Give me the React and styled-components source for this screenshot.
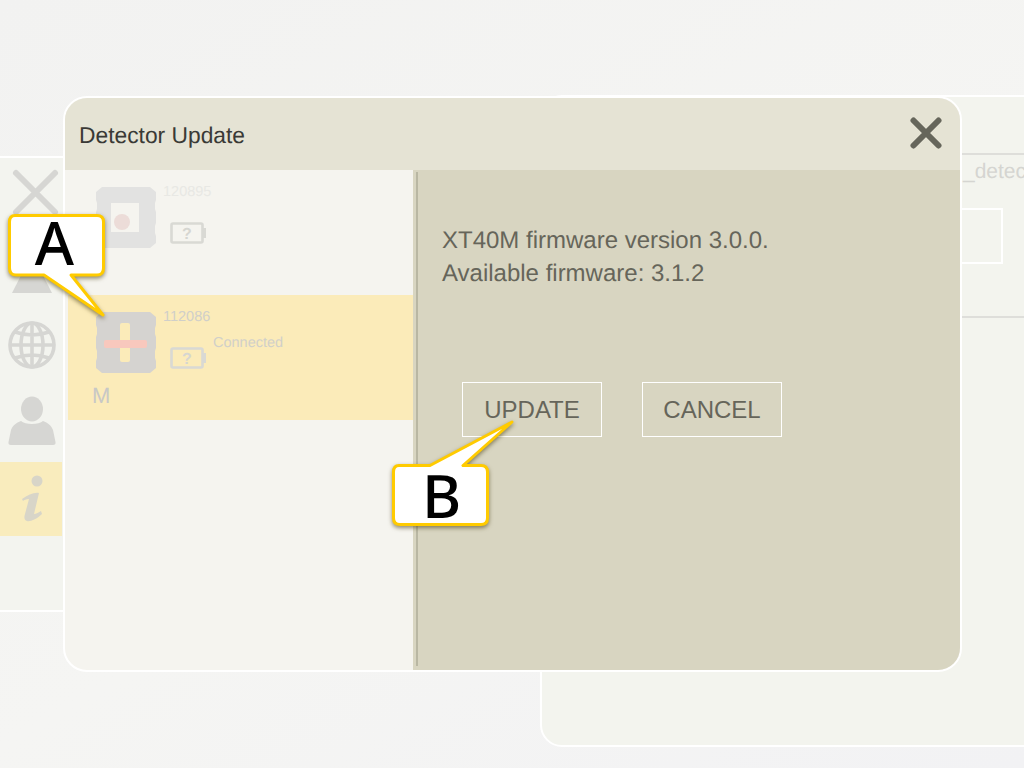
import React from "react";
import styled, { createGlobalStyle } from "styled-components";

const Global = createGlobalStyle`
  html, body { margin: 0; padding: 0; background: #f3f3f2; }
  body { font-family: "Liberation Sans", Arial, sans-serif; text-rendering: geometricPrecision; }
`;

const Desktop = styled.div`
  position: relative;
  width: 1024px;
  height: 768px;
  overflow: hidden;
  background: linear-gradient(150deg, #f2f2f1 0%, #f5f5f3 55%, #f2f2f4 100%);
`;

const Window = styled.section`
  position: absolute;
  box-sizing: border-box;
  border: 2px solid #fff;
`;

const SidePanel = styled(Window)`
  left: -4px;
  top: 156px;
  width: 70px;
  height: 456px;
  background: #f3f4ef;
  padding-left: 2px;
  display: flex;
  flex-direction: column;
`;

const SideRow = styled.div`
  height: ${(p) => p.$h || 76}px;
  width: 62px;
  flex: none;
  background: ${(p) => (p.$active ? "#f9ecbd" : "transparent")};
  svg { display: block; }
`;

const BackPanel = styled(Window)`
  left: 540px;
  top: 95px;
  width: 520px;
  height: 652px;
  border-radius: 22px;
  background: #f3f4ee;
  overflow: hidden;
  padding-left: 421px;
  color: #d5d5d1;
`;

const BackHead = styled.div`
  height: 56px;
  margin-left: -20px;
  border-bottom: 2px solid #dededa;
`;

const BackName = styled.div`
  font-size: 21px;
  line-height: 34px;
  height: 53px;
  white-space: nowrap;
`;

const BackField = styled.div`
  box-sizing: border-box;
  width: 100px;
  height: 56px;
  margin-left: -60px;
  border: 2px solid #fff;
`;

const BackRule = styled.div`
  height: 2px;
  margin: 52px 0 0 -20px;
  background: #dededa;
`;

const Modal = styled(Window)`
  left: 63px;
  top: 96px;
  width: 899px;
  height: 576px;
  border-radius: 24px;
  overflow: hidden;
  display: flex;
  flex-direction: column;
  background: #f5f4ef;
`;

const ModalHeader = styled.header`
  flex: none;
  height: 72px;
  background: #e5e3d4;
  display: flex;
  align-items: center;
  justify-content: space-between;
  padding: 0 18px 0 14px;
`;

const Title = styled.h1`
  margin: 2px 0 0;
  font-size: 22.8px;
  font-weight: 400;
  color: #3a3a36;
`;

const CloseButton = styled.button`
  border: 0;
  padding: 0;
  background: none;
  width: 32px;
  height: 32px;
  margin-bottom: 2px;
  svg { display: block; }
`;

const ModalBody = styled.div`
  flex: 1;
  display: flex;
  min-height: 0;
`;

const DeviceList = styled.aside`
  width: 348px;
  flex: none;
  padding-left: 3px;
  box-sizing: border-box;
`;

const DeviceRow = styled.div`
  box-sizing: border-box;
  height: 125px;
  padding: 17px 0 0 28px;
  background: ${(p) => (p.$selected ? "#fbebb9" : "transparent")};
`;

const DeviceTop = styled.div`
  display: flex;
  gap: 7px;
`;

const DeviceInfo = styled.div`
  margin-top: -3px;
`;

const Serial = styled.div`
  font-size: 14.5px;
  line-height: 16px;
  color: ${(p) => (p.$selected ? "#d0cfc9" : "#e8e8e4")};
`;

const StatusLine = styled.div`
  display: flex;
  gap: 7px;
  margin: 22px 0 0 7px;
`;

const StatusText = styled.div`
  font-size: 14.5px;
  line-height: 18px;
  margin-top: -13px;
  color: #d1d0c9;
`;

const Mode = styled.div`
  font-size: 22px;
  line-height: 26px;
  margin: 10px 0 0 -4px;
  color: #c8c8c6;
`;

const DetailPane = styled.main`
  flex: 1;
  position: relative;
  background: #d8d5c1;
  padding: 54px 0 0 29px;
  color: #66655a;
`;

const Divider = styled.div`
  position: absolute;
  left: 3px;
  top: 2px;
  bottom: 4px;
  width: 2px;
  background: #b9b7a3;
`;

const Info = styled.p`
  margin: 0;
  font-size: 24px;
  line-height: 33px;
`;

const Actions = styled.div`
  display: flex;
  gap: 40px;
  margin: 92px 0 0 20px;
`;

const ActionButton = styled.button`
  box-sizing: border-box;
  width: 140px;
  height: 55px;
  background: transparent;
  border: 1.5px solid #fff;
  font: 400 24px "Liberation Sans", Arial, sans-serif;
  color: #66655a;
  padding: 0;
`;

const Callout = styled.div`
  position: absolute;
  left: ${(p) => p.$x}px;
  top: ${(p) => p.$y}px;
  width: ${(p) => p.$w}px;
  height: ${(p) => p.$h}px;
  svg {
    position: absolute;
    inset: 0;
    overflow: visible;
    filter: drop-shadow(0 2px 2px rgba(60, 50, 0, 0.55));
  }
`;

const CalloutLetter = styled.span`
  position: absolute;
  left: ${(p) => p.$left}px;
  width: 97px;
  text-align: center;
  font: 500 60px/1 "Noto Sans", sans-serif;
  color: #000;
  top: ${(p) => p.$top}px;
`;

const Battery = () => (
  <svg width="36" height="22" viewBox="0 0 36 22" style={{ flex: "none" }}>
    <rect x="1.5" y="1.5" width="31" height="19" rx="1.5" fill="none" stroke="#d9d9d4" strokeWidth="2.6" />
    <rect x="33" y="6" width="3" height="10" fill="#d9d9d4" />
    <text x="17" y="17" fontSize="16" fontWeight="700" textAnchor="middle" fill="#d6d6d1" fontFamily="Liberation Sans">?</text>
  </svg>
);

const deviceShape =
  "M6 0H54L60 5V13L59 16V22L60 25V36L59 39V46L60 49V56L54 61H6L0 56V49L1 46V39L0 36V25L1 22V16L0 13V5Z";

const DeviceIcon = ({ selected }) => (
  <svg width="60" height="61" viewBox="0 0 60 61" style={{ flex: "none", display: "block" }}>
    <path d={deviceShape} fill={selected ? "#d5d3d0" : "#e2e2e1"} />
    {selected ? (
      <>
        <rect x="24" y="11" width="10" height="39" rx="2" fill="#fbebb9" />
        <rect x="8" y="28" width="43" height="8" rx="2" fill="#f8c8bd" />
      </>
    ) : (
      <>
        <rect x="15" y="16" width="28" height="29" fill="#f5f4ef" />
        <circle cx="26" cy="35" r="8" fill="#ecdcd8" />
      </>
    )}
  </svg>
);

const c = "#d6d6d3";

export default function App() {
  return (
    <Desktop>
      <Global />
      <BackPanel>
        <BackHead />
        <BackName>_detector</BackName>
        <BackField />
        <BackRule />
      </BackPanel>

      <SidePanel>
        <SideRow>
          <svg width="62" height="76" viewBox="0 0 62 76">
            <path d="M16 15L55 54M55 15L16 54" stroke={c} strokeWidth="6" strokeLinecap="round" />
          </svg>
        </SideRow>
        <SideRow>
          <svg width="62" height="76" viewBox="0 0 62 76">
            <path d="M32 20L52 59H12Z" fill={c} />
          </svg>
        </SideRow>
        <SideRow>
          <svg width="62" height="76" viewBox="0 0 62 76" fill="none" stroke={c} strokeWidth="3.6">
            <circle cx="32" cy="35" r="22" />
            <ellipse cx="32" cy="35" rx="11" ry="22" />
            <path d="M32 13V57M10 35H54M15 22Q32 28 49 22M15 48Q32 42 49 48" />
          </svg>
        </SideRow>
        <SideRow>
          <svg width="62" height="76" viewBox="0 0 62 76" fill={c}>
            <ellipse cx="32" cy="23" rx="11" ry="12.5" />
            <path d="M21 35C25 39 39 39 43 35C48 37 51 39 53 44L55.5 56Q56 59 53 59H11Q8 59 8.5 56L11 44C13 39 16 37 21 35Z" />
          </svg>
        </SideRow>
        <SideRow $active $h={74}>
          <svg width="62" height="74" viewBox="0 0 62 74" fill="#d8d5c8">
            <circle cx="37" cy="19" r="5.5" />
            <path d="M22 37C28 33 34 30 39 31L34 52C36 52 39 50 41 49L42 52C37 57 30 60 27 59C24 58 24 55 25 52L29 37C26 37 24 38 23 39Z" />
          </svg>
        </SideRow>
      </SidePanel>

      <Modal>
        <ModalHeader>
          <Title>Detector Update</Title>
          <CloseButton aria-label="Close">
            <svg width="32" height="32" viewBox="0 0 32 32">
              <path d="M3.5 3.5L28.5 28.5M28.5 3.5L3.5 28.5" stroke="#66665b" strokeWidth="6" strokeLinecap="round" />
            </svg>
          </CloseButton>
        </ModalHeader>
        <ModalBody>
          <DeviceList>
            <DeviceRow>
              <DeviceTop>
                <DeviceIcon />
                <DeviceInfo>
                  <Serial>120895</Serial>
                  <StatusLine><Battery /></StatusLine>
                </DeviceInfo>
              </DeviceTop>
            </DeviceRow>
            <DeviceRow $selected>
              <DeviceTop>
                <DeviceIcon selected />
                <DeviceInfo>
                  <Serial $selected>112086</Serial>
                  <StatusLine>
                    <Battery />
                    <StatusText>Connected</StatusText>
                  </StatusLine>
                </DeviceInfo>
              </DeviceTop>
              <Mode>M</Mode>
            </DeviceRow>
          </DeviceList>
          <DetailPane>
            <Divider />
            <Info>XT40M firmware version 3.0.0.</Info>
            <Info>Available firmware: 3.1.2</Info>
            <Actions>
              <ActionButton>UPDATE</ActionButton>
              <ActionButton>CANCEL</ActionButton>
            </Actions>
          </DetailPane>
        </ModalBody>
      </Modal>

      <Callout $x={8} $y={214} $w={97} $h={62}>
        <svg width="97" height="62" viewBox="0 0 97 62">
          <path
            d="M7 1.5H89Q95.5 1.5 95.5 8V54Q95.5 61 89 61H63L95 101L36 61H8Q1.5 61 1.5 54V8Q1.5 1.5 7 1.5Z"
            fill="#fff" stroke="#ffcb00" strokeWidth="3" strokeLinejoin="round"
          />
        </svg>
        <CalloutLetter $left={-2} $top={-2}>A</CalloutLetter>
      </Callout>

      <Callout $x={392} $y={464} $w={97} $h={62}>
        <svg width="97" height="62" viewBox="0 0 97 62">
          <path
            d="M7 1.5H38L120 -42L71 1.5H89Q95.5 1.5 95.5 8V54Q95.5 60.5 89 60.5H8Q1.5 60.5 1.5 54V8Q1.5 1.5 7 1.5Z"
            fill="#fff" stroke="#ffcb00" strokeWidth="3" strokeLinejoin="round"
          />
        </svg>
        <CalloutLetter $left={1} $top={1}>B</CalloutLetter>
      </Callout>
    </Desktop>
  );
}
